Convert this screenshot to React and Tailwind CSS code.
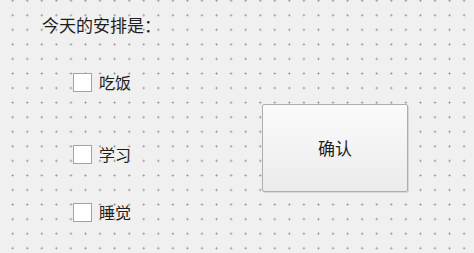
export default function App() {
  const font = { fontFamily: '"Noto Sans CJK SC", "Noto Sans", sans-serif' };
  const Check = ({ label, className = "" }) => (
    <div className={"flex items-center h-[19px] " + className}>
      <div className="w-[19px] h-[19px] border border-[#a3a3a3] bg-white shrink-0" />
      <span className="ml-[7px] text-[16px] leading-[19px] text-[#1e1e1e]">{label}</span>
    </div>
  );
  return (
    <div
      style={font}
      className="w-[474px] h-[253px] overflow-hidden bg-[#f0f0f0] bg-[radial-gradient(circle_at_center,#8e8e8e_0.75px,transparent_1.25px)] bg-[length:14.57px_14.57px] bg-[position:5.4px_-6.6px]"
    >
      <div className="pl-[42px] pt-[13px] text-[17px] leading-[24px] text-[#1e1e1e]">今天的安排是：</div>
      <div className="flex mt-[36px]">
        <div className="w-[262px] pl-[73px] flex flex-col">
          <Check label="吃饭" />
          <Check label="学习" className="mt-[53px]" />
          <Check label="睡觉" className="mt-[39px]" />
        </div>
        <button className="mt-[31px] w-[146px] h-[88px] border border-[#adadad] rounded-[2px] bg-gradient-to-b from-[#fbfbfb] to-[#ebebeb] flex items-center justify-center text-[17px] text-[#1e1e1e] shadow-[1px_1px_0_#d8d8d8]">
          确认
        </button>
      </div>
    </div>
  );
}
